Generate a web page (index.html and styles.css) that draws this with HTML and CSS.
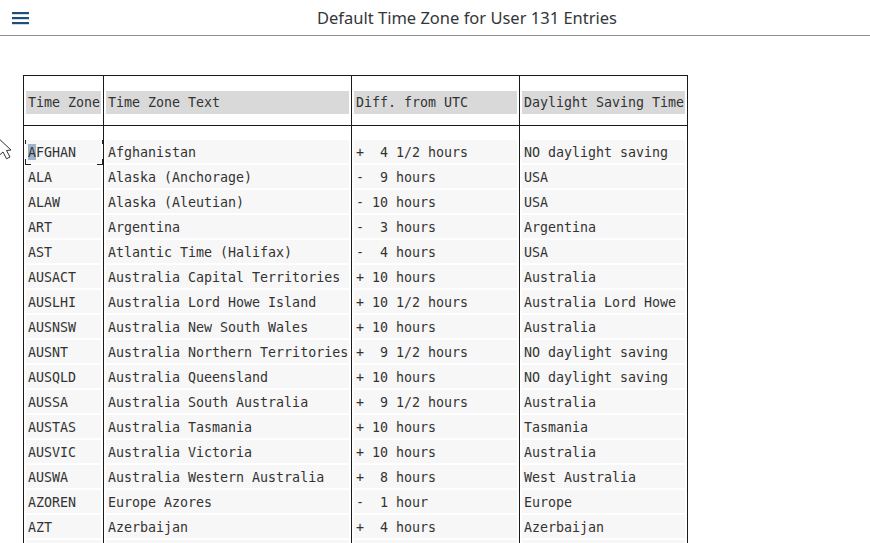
FILE: index.html
```html
<!DOCTYPE html>
<html>
<head>
<meta charset="utf-8">
<link rel="stylesheet" href="styles.css">
</head>
<body>
<header class="bar">
  <button class="menu" aria-label="Menu">
    <svg width="18" height="14" viewBox="0 0 18 14"><rect x="0" y="1" width="17" height="2.2" fill="#1f4e7a"/><rect x="0" y="6" width="17" height="2.2" fill="#1f4e7a"/><rect x="0" y="11" width="17" height="2.2" fill="#1f4e7a"/></svg>
  </button>
  <h1 class="title">Default Time Zone for User 131 Entries</h1>
  <span class="spacer"></span>
</header>
<main class="content">
  <svg class="pointer" width="16" height="26" viewBox="0 0 16 26"><path d="M-4 0 L11 14 L6.5 14.5 L10 21 L6.5 22.8 L3 16 L-1 19.5 Z" fill="#fff" stroke="#333" stroke-width="1"/></svg>
  <table class="grid">
    <colgroup><col class="c1"><col class="c2"><col class="c3"><col class="c4"></colgroup>
    <thead>
      <tr>
        <th><span class="hl">Time Zone</span></th>
        <th><span class="hl">Time Zone Text</span></th>
        <th><span class="hl">Diff. from UTC</span></th>
        <th><span class="hl">Daylight Saving Time</span></th>
      </tr>
    </thead>
    <tbody>
      <tr class="gap"><td></td><td></td><td></td><td></td></tr>
      <tr><td class="focus"><span class="v"><span class="sel">A</span>FGHAN</span><span class="brk"></span></td><td><span class="v">Afghanistan</span></td><td><span class="v">+  4 1/2 hours</span></td><td><span class="v">NO daylight saving</span></td></tr>
      <tr><td><span class="v">ALA</span></td><td><span class="v">Alaska (Anchorage)</span></td><td><span class="v">-  9 hours</span></td><td><span class="v">USA</span></td></tr>
      <tr><td><span class="v">ALAW</span></td><td><span class="v">Alaska (Aleutian)</span></td><td><span class="v">- 10 hours</span></td><td><span class="v">USA</span></td></tr>
      <tr><td><span class="v">ART</span></td><td><span class="v">Argentina</span></td><td><span class="v">-  3 hours</span></td><td><span class="v">Argentina</span></td></tr>
      <tr><td><span class="v">AST</span></td><td><span class="v">Atlantic Time (Halifax)</span></td><td><span class="v">-  4 hours</span></td><td><span class="v">USA</span></td></tr>
      <tr><td><span class="v">AUSACT</span></td><td><span class="v">Australia Capital Territories</span></td><td><span class="v">+ 10 hours</span></td><td><span class="v">Australia</span></td></tr>
      <tr><td><span class="v">AUSLHI</span></td><td><span class="v">Australia Lord Howe Island</span></td><td><span class="v">+ 10 1/2 hours</span></td><td><span class="v">Australia Lord Howe</span></td></tr>
      <tr><td><span class="v">AUSNSW</span></td><td><span class="v">Australia New South Wales</span></td><td><span class="v">+ 10 hours</span></td><td><span class="v">Australia</span></td></tr>
      <tr><td><span class="v">AUSNT</span></td><td><span class="v">Australia Northern Territories</span></td><td><span class="v">+  9 1/2 hours</span></td><td><span class="v">NO daylight saving</span></td></tr>
      <tr><td><span class="v">AUSQLD</span></td><td><span class="v">Australia Queensland</span></td><td><span class="v">+ 10 hours</span></td><td><span class="v">NO daylight saving</span></td></tr>
      <tr><td><span class="v">AUSSA</span></td><td><span class="v">Australia South Australia</span></td><td><span class="v">+  9 1/2 hours</span></td><td><span class="v">Australia</span></td></tr>
      <tr><td><span class="v">AUSTAS</span></td><td><span class="v">Australia Tasmania</span></td><td><span class="v">+ 10 hours</span></td><td><span class="v">Tasmania</span></td></tr>
      <tr><td><span class="v">AUSVIC</span></td><td><span class="v">Australia Victoria</span></td><td><span class="v">+ 10 hours</span></td><td><span class="v">Australia</span></td></tr>
      <tr><td><span class="v">AUSWA</span></td><td><span class="v">Australia Western Australia</span></td><td><span class="v">+  8 hours</span></td><td><span class="v">West Australia</span></td></tr>
      <tr><td><span class="v">AZOREN</span></td><td><span class="v">Europe Azores</span></td><td><span class="v">-  1 hour</span></td><td><span class="v">Europe</span></td></tr>
      <tr><td><span class="v">AZT</span></td><td><span class="v">Azerbaijan</span></td><td><span class="v">+  4 hours</span></td><td><span class="v">Azerbaijan</span></td></tr>
      <tr><td><span class="v"></span></td><td><span class="v"></span></td><td><span class="v"></span></td><td><span class="v"></span></td></tr>
    </tbody>
  </table>
</main>
</body>
</html>
```

FILE: styles.css
```css
* { box-sizing: border-box; }
html, body { margin: 0; padding: 0; background: #fff; overflow: hidden; height: 543px; }
body { font-family: "Noto Sans", "Open Sans", sans-serif; color: #32363a; }

.bar {
  height: 36px;
  display: flex;
  align-items: center;
  border-bottom: 1px solid #89919a;
}
.menu {
  width: 44px;
  height: 35px;
  border: 0;
  background: none;
  padding: 0 0 0 12px;
  display: flex;
  align-items: center;
}
.title {
  flex: 1;
  margin: 0;
  text-align: center;
  font-size: 16.5px;
  font-weight: 400;
  color: #32363a;
  padding-left: 64px;
}
.spacer { width: 44px; }

.content {
  position: relative;
  padding: 39px 0 0 23px;
}
.pointer {
  position: absolute;
  left: 0;
  top: 100px;
}

.grid {
  border-collapse: separate;
  border-spacing: 0;
  table-layout: fixed;
  width: 665px;
  font-family: "DejaVu Sans Mono", "Liberation Mono", monospace;
  font-size: 13.3px;
  color: #333;
  border-top: 1px solid #1a1a1a;
}
.c1 { width: 81px; }
.c2 { width: 248px; }
.c3 { width: 168px; }
.c4 { width: 168px; }

.grid th, .grid td {
  border-right: 1px solid #1a1a1a;
  padding: 0 2px;
  white-space: pre;
  text-align: left;
  font-weight: 400;
  vertical-align: top;
  overflow: hidden;
}
.grid th:first-child, .grid td:first-child { border-left: 1px solid #1a1a1a; }
.grid th {
  height: 50px;
  padding-top: 15px;
  border-bottom: 1px solid #1a1a1a;
}
.hl {
  display: block;
  height: 23px;
  line-height: 24px;
  background: #d9d9d9;
  padding-left: 2px;
}
.grid tr.gap td { height: 14px; }
.grid td { height: 25px; }
.v {
  display: block;
  height: 23px;
  line-height: 25px;
  background: #f7f7f7;
  padding-left: 2px;
}
.sel { background: #9fb4cb; display: inline-block; height: 16px; line-height: 17px; }
.focus { position: relative; }
.brk {
  position: absolute;
  left: 1px;
  right: 0;
  top: -2px;
  height: 27px;
  background:
    linear-gradient(#222, #222) left top / 6px 1px no-repeat,
    linear-gradient(#222, #222) left top / 1px 6px no-repeat,
    linear-gradient(#222, #222) right top / 6px 1px no-repeat,
    linear-gradient(#222, #222) right top / 1px 6px no-repeat,
    linear-gradient(#222, #222) left bottom / 6px 1px no-repeat,
    linear-gradient(#222, #222) left bottom / 1px 6px no-repeat,
    linear-gradient(#222, #222) right bottom / 6px 1px no-repeat,
    linear-gradient(#222, #222) right bottom / 1px 6px no-repeat;
}
```
